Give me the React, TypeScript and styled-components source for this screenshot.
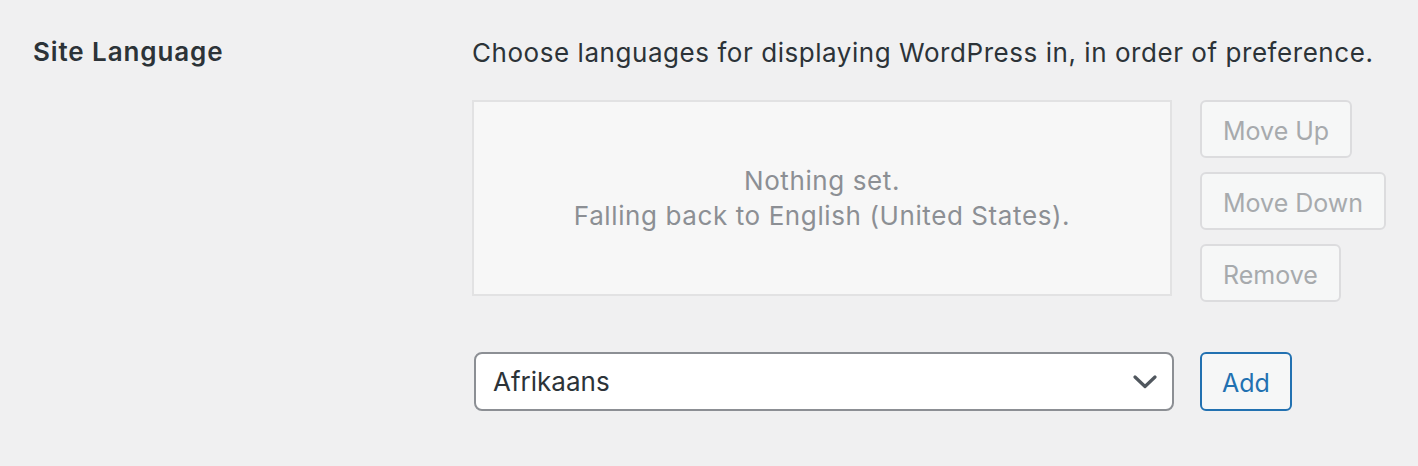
import styled, {createGlobalStyle} from 'styled-components';

const GlobalStyle = createGlobalStyle`
  html, body {
    margin: 0;
    padding: 0;
    background: #f0f0f1;
  }
  body {
    font-family: Inter, "Noto Sans", "Liberation Sans", sans-serif;
    color: #3c434a;
  }
`;

const buttonLabels = ['Move Up', 'Move Down', 'Remove'];

export default function App() {
  return (
    <>
      <GlobalStyle />
      <SettingRow>
        <Label>Site Language</Label>
        <Field>
          <Description>Choose languages for displaying WordPress in, in order of preference.</Description>
          <EditorRow>
            <ListBox>
              <Empty>
                Nothing set.
                <br />
                Falling back to English (United States).
              </Empty>
            </ListBox>
            <ButtonStack>
              {buttonLabels.map(label => (
                <Button key={label} disabled>{label}</Button>
              ))}
            </ButtonStack>
          </EditorRow>
          <AddRow>
            <SelectBox>
              <span>Afrikaans</span>
              <svg width="24" height="14" viewBox="0 0 24 14" aria-hidden="true">
                <path d="M2 2 L12 11.5 L22 2" fill="none" stroke="#50575e" strokeWidth="3.2" strokeLinecap="round" strokeLinejoin="round" />
              </svg>
            </SelectBox>
            <Button $primary>Add</Button>
          </AddRow>
        </Field>
      </SettingRow>
    </>
  );
}

const SettingRow = styled.div`
  display: grid;
  grid-template-columns: 439px 1fr;
  padding: 35px 0 0 33px;
  height: 466px;
  box-sizing: border-box;
`;

const Label = styled.div`
  font-size: 26px;
  font-weight: 600;
  line-height: 34px;
  letter-spacing: 0.9px;
  color: #2c3338;
`;

const Field = styled.div`
  display: flex;
  flex-direction: column;
`;

const Description = styled.p`
  margin: 0;
  font-size: 26px;
  line-height: 36px;
  letter-spacing: 0.55px;
  color: #2c3338;
`;

const EditorRow = styled.div`
  display: flex;
  align-items: flex-start;
  gap: 28px;
  margin-top: 29px;
`;

const ListBox = styled.div`
  width: 700px;
  height: 196px;
  box-sizing: border-box;
  border: 2px solid #e2e2e3;
  background: #f7f7f7;
  display: flex;
  align-items: center;
  justify-content: center;
`;

const Empty = styled.p`
  margin: 0;
  text-align: center;
  font-size: 26px;
  line-height: 35px;
  letter-spacing: 0.6px;
  color: #8c8f94;
`;

const ButtonStack = styled.div`
  display: flex;
  flex-direction: column;
  align-items: flex-start;
  gap: 14px;
`;

const Button = styled.button<{$primary?: boolean}>`
  height: 58px;
  padding: 3px 21px 0;
  box-sizing: border-box;
  border: 2px solid ${p => (p.$primary ? '#2271b1' : '#dcdcde')};
  border-radius: 6px;
  background: #f6f7f7;
  color: ${p => (p.$primary ? '#2271b1' : '#a7aaad')};
  font-family: inherit;
  font-size: 25px;
  cursor: ${p => (p.$primary ? 'pointer' : 'default')};
`;

const AddRow = styled.div`
  display: flex;
  align-items: center;
  gap: 26px;
  margin-top: 50px;
  padding-left: 2px;

  & > button {
    height: 59px;
    padding: 2px 20px 0;
  }
`;

const SelectBox = styled.div`
  width: 700px;
  height: 59px;
  box-sizing: border-box;
  border: 2px solid #8c8f94;
  border-radius: 8px;
  background: #fff;
  display: flex;
  align-items: center;
  justify-content: space-between;
  padding: 0 15px 0 17px;
  font-size: 26px;
  color: #2c3338;
`;
